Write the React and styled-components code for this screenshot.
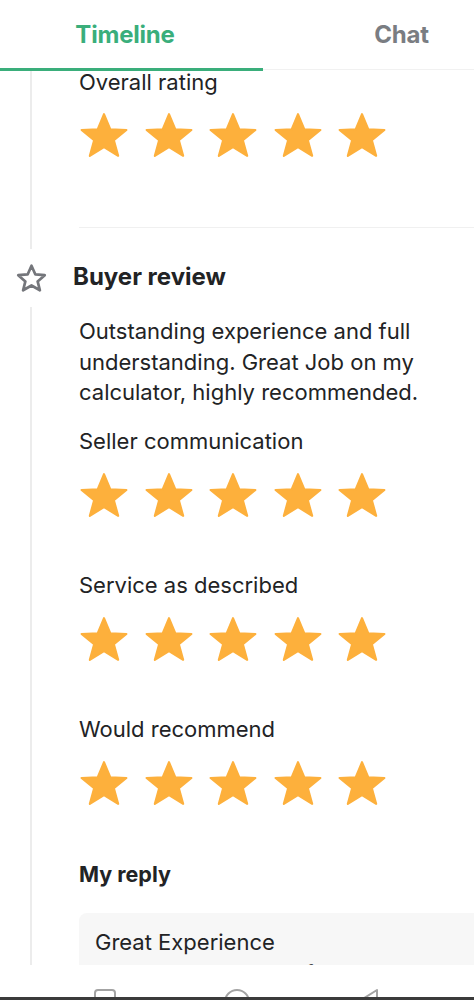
import React from "react";
import styled, { createGlobalStyle } from "styled-components";

const GlobalStyle = createGlobalStyle`
  html, body {
    margin: 0;
    padding: 0;
    background: #fff;
  }
  body {
    font-family: "Inter", "Noto Sans", sans-serif;
    color: #222325;
  }
`;

const Screen = styled.div`
  width: 474px;
  height: 1000px;
  display: flex;
  flex-direction: column;
  overflow: hidden;
  background: #fff;
`;

// header tabs
const TabBar = styled.div`
  height: 70px;
  flex-shrink: 0;
  display: flex;
  position: relative;
  border-bottom: 1px solid #f1f1f1;
  box-sizing: border-box;
`;

const Tab = styled.div`
  width: ${(p) => p.width};
  flex: ${(p) => (p.width ? "none" : 1)};
  display: flex;
  align-items: center;
  justify-content: center;
  padding: ${(p) => p.pad};
  box-sizing: border-box;
  font-size: 24px;
  font-weight: 700;
  letter-spacing: -0.2px;
  color: ${(p) => (p.active ? "#3aae7b" : "#7a7d82")};
  position: relative;
  &::after {
    content: "";
    display: ${(p) => (p.active ? "block" : "none")};
    position: absolute;
    left: 0;
    right: 0;
    bottom: -2px;
    height: 3px;
    background: #3aae7b;
  }
`;

const Content = styled.div`
  flex: 1;
  overflow: hidden;
`;

const Row = styled.div`
  display: flex;
`;

const Rail = styled.div`
  width: 62px;
  flex-shrink: 0;
  display: flex;
  justify-content: center;
`;

const RailLine = styled.div`
  width: 2px;
  background: #ececec;
  flex-shrink: 0;
`;

const Body = styled.div`
  flex: 1;
  min-width: 0;
  padding-left: 17px;
  padding-bottom: ${(p) => p.bottom || "0"};
`;

const Label = styled.div`
  font-size: 22px;
  line-height: ${(p) => p.lh || "30px"};
  margin-top: ${(p) => p.top || "0"};
  color: #222325;
`;

const Heading = styled.div`
  font-size: ${(p) => p.size || "24px"};
  font-weight: 700;
  line-height: 30px;
  color: #222325;
  margin-left: ${(p) => p.shift || "0"};
  margin-top: ${(p) => p.top || "0"};
  padding-top: ${(p) => p.padTop || "0"};
`;

const Paragraph = styled.p`
  margin: 9px 0 0;
  font-size: 22px;
  line-height: 30.5px;
  color: #222325;
  padding-right: 20px;
`;

const Stars = styled.div`
  display: flex;
  gap: 14.5px;
  margin-top: ${(p) => p.top || "15px"};
  height: 48px;
  align-items: center;
`;

const Divider = styled.div`
  height: 1px;
  background: #f0f0f0;
  margin-top: 68px;
`;

const ReplyBox = styled.div`
  margin-top: 24px;
  background: #f7f7f7;
  border-radius: 8px 0 0 8px;
  padding: 14px 16px 0;
  height: 80px;
`;

const ReplyText = styled.div`
  font-size: 22px;
  line-height: 31px;
  color: #222325;
`;

const HeadIcon = styled.div`
  width: 62px;
  flex-shrink: 0;
  display: flex;
  justify-content: center;
  align-items: center;
  padding-top: 14px;
  padding-bottom: 14px;
  box-sizing: border-box;
`;

const NavBar = styled.div`
  height: 35px;
  flex-shrink: 0;
  display: flex;
  flex-direction: column;
  background: #fff;
`;

const NavIcons = styled.div`
  flex: 1;
  overflow: hidden;
  display: flex;
  justify-content: space-around;
  padding: 23px 40px 0;
`;

const NavStrip = styled.div`
  height: 3px;
  background: #3b3b3b;
`;

const FilledStar = () => (
  <svg width="50" height="48" viewBox="0 0 48 46">
    <polygon
      points="24,3 30,17.5 45.5,18.2 33.5,28 37.6,43 24,34.6 10.4,43 14.5,28 2.5,18.2 18,17.5"
      fill="#fdb03c"
      stroke="#fdb03c"
      strokeWidth="2"
      strokeLinejoin="round"
    />
  </svg>
);

const OutlineStar = () => (
  <svg width="31" height="30" viewBox="0 0 48 46">
    <polygon
      points="24,4 30,17.5 44.5,18.7 33.5,28.3 37,42 24,34.6 11,42 14.5,28.3 3.5,18.7 18,17.5"
      fill="none"
      stroke="#74767b"
      strokeWidth="4.2"
      strokeLinejoin="round"
    />
  </svg>
);

const Rating = ({ top }) => (
  <Stars top={top}>
    {[0, 1, 2, 3, 4].map((i) => (
      <FilledStar key={i} />
    ))}
  </Stars>
);

const NavSquare = () => (
  <svg width="24" height="24" viewBox="0 0 24 24">
    <rect x="2" y="2" width="20" height="20" rx="3" fill="none" stroke="#a3a3a3" strokeWidth="2" />
  </svg>
);
const NavCircle = () => (
  <svg width="28" height="28" viewBox="0 0 28 28">
    <circle cx="14" cy="14" r="12" fill="none" stroke="#a3a3a3" strokeWidth="2" />
  </svg>
);
const NavBack = () => (
  <svg width="24" height="24" viewBox="0 0 24 24">
    <path d="M20 2 L4 12 L20 22 Z" fill="none" stroke="#a3a3a3" strokeWidth="2" strokeLinejoin="round" />
  </svg>
);

const App = () => {
  return (
    <Screen>
      <GlobalStyle />
      <TabBar>
        <Tab active width="263px" pad="0 13px 0 0">
          Timeline
        </Tab>
        <Tab pad="0 0 0 66px">Chat</Tab>
      </TabBar>
      <Content>
        <Row>
          <Rail>
            <RailLine />
          </Rail>
          <Body bottom="21px">
            <Label lh="24px">Overall rating</Label>
            <Rating top="17px" />
            <Divider />
          </Body>
        </Row>
        <Row>
          <HeadIcon>
            <OutlineStar />
          </HeadIcon>
          <Heading shift="11px" padTop="13px">
            Buyer review
          </Heading>
        </Row>
        <Row>
          <Rail>
            <RailLine />
          </Rail>
          <Body bottom="20px">
            <Paragraph>
              Outstanding experience and full understanding. Great Job on my
              calculator, highly recommended.
            </Paragraph>
            <Label top="18px">Seller communication</Label>
            <Rating />
            <Label top="51px">Service as described</Label>
            <Rating />
            <Label top="51px">Would recommend</Label>
            <Rating />
            <Heading size="21.5px" top="52px">
              My reply
            </Heading>
            <ReplyBox>
              <ReplyText>Great Experience</ReplyText>
              <ReplyText>Thank you so much for the order</ReplyText>
            </ReplyBox>
          </Body>
        </Row>
      </Content>
      <NavBar>
        <NavIcons>
          <NavSquare />
          <NavCircle />
          <NavBack />
        </NavIcons>
        <NavStrip />
      </NavBar>
    </Screen>
  );
};

export default App;
